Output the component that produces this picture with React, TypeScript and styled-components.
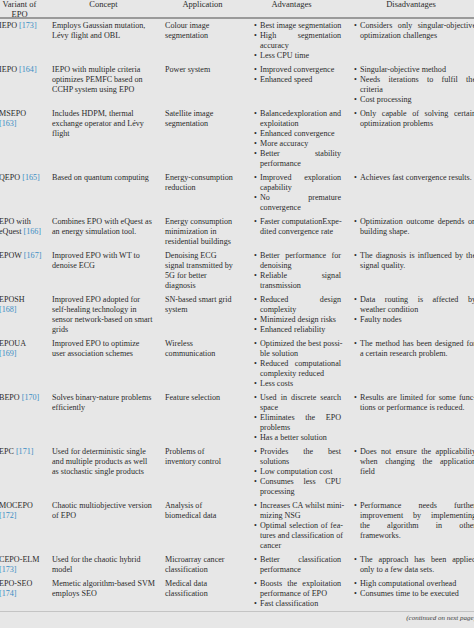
import { createGlobalStyle, styled } from "styled-components"

type Variant = { name: string[]; ref: string }
type Entry = {
  variant: Variant
  concept: string[]
  application: string[]
  advantages: string[][]
  disadvantages: string[][]
}

// each bullet is split into its printed lines, all but the last are justified
const rows: Entry[] = [
  {
    variant: { name: ["IEPO"], ref: "173" },
    concept: ["Employs Gaussian mutation,", "Lévy flight and OBL"],
    application: ["Colour image", "segmentation"],
    advantages: [["Best image segmentation"], ["High segmentation", "accuracy"], ["Less CPU time"]],
    disadvantages: [["Considers only singular-objective", "optimization challenges"]],
  },
  {
    variant: { name: ["IEPO"], ref: "164" },
    concept: ["IEPO with multiple criteria", "optimizes PEMFC based on", "CCHP system using EPO"],
    application: ["Power system"],
    advantages: [["Improved convergence"], ["Enhanced speed"]],
    disadvantages: [["Singular-objective method"], ["Needs iterations to fulfil the", "criteria"], ["Cost processing"]],
  },
  {
    variant: { name: ["MSEPO", ""], ref: "163" },
    concept: ["Includes HDPM, thermal", "exchange operator and Lévy", "flight"],
    application: ["Satellite image", "segmentation"],
    advantages: [
      ["Balancedexploration and", "exploitation"],
      ["Enhanced convergence"],
      ["More accuracy"],
      ["Better stability", "performance"],
    ],
    disadvantages: [["Only capable of solving certain", "optimization problems"]],
  },
  {
    variant: { name: ["QEPO"], ref: "165" },
    concept: ["Based on quantum computing"],
    application: ["Energy-consumption", "reduction"],
    advantages: [["Improved exploration", "capability"], ["No premature", "convergence"]],
    disadvantages: [["Achieves fast convergence results."]],
  },
  {
    variant: { name: ["EPO with", "eQuest"], ref: "166" },
    concept: ["Combines EPO with eQuest as", "an energy simulation tool."],
    application: ["Energy consumption", "minimization in", "residential buildings"],
    advantages: [["Faster computationExpe-", "dited convergence rate"]],
    disadvantages: [["Optimization outcome depends on", "building shape."]],
  },
  {
    variant: { name: ["EPOW"], ref: "167" },
    concept: ["Improved EPO with WT to", "denoise ECG"],
    application: ["Denoising ECG", "signal transmitted by", "5G for better", "diagnosis"],
    advantages: [["Better performance for", "denoising"], ["Reliable signal", "transmission"]],
    disadvantages: [["The diagnosis is influenced by the", "signal quality."]],
  },
  {
    variant: { name: ["EPOSH", ""], ref: "168" },
    concept: ["Improved EPO adopted for", "self-healing technology in", "sensor network-based on smart", "grids"],
    application: ["SN-based smart grid", "system"],
    advantages: [["Reduced design", "complexity"], ["Minimized design risks"], ["Enhanced reliability"]],
    disadvantages: [["Data routing is affected by", "weather condition"], ["Faulty nodes"]],
  },
  {
    variant: { name: ["EPOUA", ""], ref: "169" },
    concept: ["Improved EPO to optimize", "user association schemes"],
    application: ["Wireless", "communication"],
    advantages: [
      ["Optimized the best possi-", "ble solution"],
      ["Reduced computational", "complexity reduced"],
      ["Less costs"],
    ],
    disadvantages: [["The method has been designed for", "a certain research problem."]],
  },
  {
    variant: { name: ["BEPO"], ref: "170" },
    concept: ["Solves binary-nature problems", "efficiently"],
    application: ["Feature selection"],
    advantages: [["Used in discrete search", "space"], ["Eliminates the EPO", "problems"], ["Has a better solution"]],
    disadvantages: [["Results are limited for some func-", "tions or performance is reduced."]],
  },
  {
    variant: { name: ["EPC"], ref: "171" },
    concept: ["Used for deterministic single", "and multiple products as well", "as stochastic single products"],
    application: ["Problems of", "inventory control"],
    advantages: [["Provides the best", "solutions"], ["Low computation cost"], ["Consumes less CPU", "processing"]],
    disadvantages: [["Does not ensure the applicability", "when changing the application", "field"]],
  },
  {
    variant: { name: ["MOCEPO", ""], ref: "172" },
    concept: ["Chaotic multiobjective version", "of EPO"],
    application: ["Analysis of", "biomedical data"],
    advantages: [
      ["Increases CA whilst mini-", "mizing NSG"],
      ["Optimal selection of fea-", "tures and classification of", "cancer"],
    ],
    disadvantages: [["Performance needs further", "improvement by implementing", "the algorithm in other", "frameworks."]],
  },
  {
    variant: { name: ["CEPO-ELM", ""], ref: "173" },
    concept: ["Used for the chaotic hybrid", "model"],
    application: ["Microarray cancer", "classification"],
    advantages: [["Better classification", "performance"]],
    disadvantages: [["The approach has been applied", "only to a few data sets."]],
  },
  {
    variant: { name: ["EPO-SEO", ""], ref: "174" },
    concept: ["Memetic algorithm-based SVM", "employs SEO"],
    application: ["Medical data", "classification"],
    advantages: [["Boosts the exploitation", "performance of EPO"], ["Fast classification"]],
    disadvantages: [["High computational overhead"], ["Consumes time to be executed"]],
  },
]

function Bullets({ items }: { items: string[][] }) {
  return (
    <>
      {items.map((lines, i) => (
        <Item key={i}>
          <Dot>•</Dot>
          <div>
            {lines.map((line, j) => (
              <Line key={j} $justify={j < lines.length - 1}>
                {line}
              </Line>
            ))}
          </div>
        </Item>
      ))}
    </>
  )
}

function Plain({ lines }: { lines: string[] }) {
  return (
    <>
      {lines.map((line, i) => (
        <Line key={i}>{line}</Line>
      ))}
    </>
  )
}

export default function App() {
  return (
    <>
      <GlobalStyle />
      <Table>
        <HeaderRow>
          <HeadCell $pr={12}>
            Variant of
            <br />
            EPO
          </HeadCell>
          <HeadCell $pr={10}>Concept</HeadCell>
          <HeadCell $pr={14}>Application</HeadCell>
          <HeadCell $pr={25}>Advantages</HeadCell>
          <HeadCell $pr={11}>Disadvantages</HeadCell>
        </HeaderRow>
        {rows.map((row, i) => (
          <Row key={i}>
            <Cell $pr={4}>
              {row.variant.name.map((name, j) => (
                <Line key={j}>
                  {name}
                  {j === row.variant.name.length - 1 && (
                    <>
                      {name ? " " : ""}
                      <Ref>[{row.variant.ref}]</Ref>
                    </>
                  )}
                </Line>
              ))}
            </Cell>
            <Cell $pr={4}>
              <Plain lines={row.concept} />
            </Cell>
            <Cell $pr={4}>
              <Plain lines={row.application} />
            </Cell>
            <Cell $pr={13}>
              <Bullets items={row.advantages} />
            </Cell>
            <Cell $pr={3}>
              <Bullets items={row.disadvantages} />
            </Cell>
          </Row>
        ))}
        <Footer>(continued on next page)</Footer>
      </Table>
    </>
  )
}

const GlobalStyle = createGlobalStyle`
  html, body {
    margin: 0;
    padding: 0;
    background: #e7e7e7;
  }
  body {
    overflow: hidden;
    font-family: "Liberation Serif", "Times New Roman", serif;
    color: #2b2b2b;
  }
`

const columns = "53px 113px 89px 100px 125px"

const Table = styled.div`
  width: 480px;
  margin-left: -1px;
  font-size: 8.1px;
  line-height: 10px;
`

const HeaderRow = styled.div`
  display: grid;
  grid-template-columns: ${columns};
  height: 18px;
  margin-top: -1px;
  border-bottom: 2px solid #9a9a9a;
`

const HeadCell = styled.div<{ $pr: number }>`
  padding-right: ${({ $pr }) => $pr}px;
  text-align: center;
  font-size: 8.5px;
  line-height: 10px;
`

const Row = styled.div`
  display: grid;
  grid-template-columns: ${columns};
  padding: 2px 0 2px;
`

const Cell = styled.div<{ $pr: number }>`
  padding-right: ${({ $pr }) => $pr}px;
  min-width: 0;
`

const Line = styled.div<{ $justify?: boolean }>`
  white-space: nowrap;
  text-align: ${({ $justify }) => ($justify ? "justify" : "left")};
  text-align-last: ${({ $justify }) => ($justify ? "justify" : "auto")};
`

const Item = styled.div`
  display: grid;
  grid-template-columns: 6px 1fr;
`

const Dot = styled.span`
  font-size: 8px;
`

const Ref = styled.span`
  color: #3b8dc4;
`

const Footer = styled.div`
  border-top: 1px solid #c4c4c4;
  padding: 2px 3px 0 0;
  text-align: right;
  font-style: italic;
  font-size: 7px;
  line-height: 9px;
  color: #444;
`
